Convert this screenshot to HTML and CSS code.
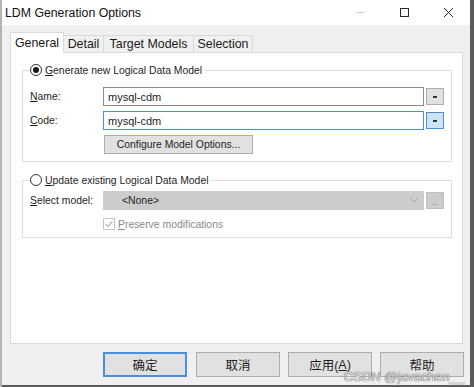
FILE: index.html
```html
<!DOCTYPE html>
<html lang="en">
<head>
    <meta charset="UTF-8">
    <title>LDM Generation Options</title>
    <link rel="stylesheet" href="styles.css">
</head>
<body>
    <div class="window">
        <div class="titlebar">
            <span class="title">LDM Generation Options</span>
            <div class="controls">
                <svg width="9" height="9" viewBox="0 0 9 9"><path d="M0 4.5H9" stroke="#d2d2d2" stroke-width="1"/></svg>
                <svg width="9" height="9" viewBox="0 0 9 9"><rect x="0.5" y="0.5" width="8" height="8" fill="none" stroke="#2b2b2b" stroke-width="1"/></svg>
                <svg width="9" height="9" viewBox="0 0 9 9"><path d="M0 0L9 9M9 0L0 9" stroke="#2b2b2b" stroke-width="1"/></svg>
            </div>
        </div>

        <div class="content">
            <div class="tabs">
                <div class="tab active tab-general">General</div>
                <div class="tab tab-detail">Detail</div>
                <div class="tab tab-target">Target Models</div>
                <div class="tab tab-selection">Selection</div>
            </div>

            <div class="panel">
                <fieldset class="group group-new">
                    <legend><span class="radio checked"></span><span><u>G</u>enerate new Logical Data Model</span></legend>
                    <div class="row">
                        <label><u>N</u>ame:</label>
                        <div class="field">mysql-cdm</div>
                        <div class="eq"><span></span></div>
                    </div>
                    <div class="row">
                        <label><u>C</u>ode:</label>
                        <div class="field focus">mysql-cdm</div>
                        <div class="eq focus"><span></span></div>
                    </div>
                    <div class="row">
                        <label></label>
                        <div class="btn configure">Configure Model Options...</div>
                    </div>
                </fieldset>

                <fieldset class="group group-update">
                    <legend><span class="radio"></span><span><u>U</u>pdate existing Logical Data Model</span></legend>
                    <div class="row">
                        <label><u>S</u>elect model:</label>
                        <div class="select">
                            <span>&lt;None&gt;</span>
                            <svg width="8" height="5" viewBox="0 0 8 5"><path d="M0.5 0.5L4 4L7.5 0.5" fill="none" stroke="#a4a4a4" stroke-width="1"/></svg>
                        </div>
                        <div class="dots"><span></span></div>
                    </div>
                    <div class="row check-row">
                        <label></label>
                        <span class="checkbox">
                            <svg width="10" height="10" viewBox="0 0 10 10"><path d="M1.5 5L4 7.5L8.5 2" fill="none" stroke="#bdbdbd" stroke-width="1.3"/></svg>
                        </span>
                        <span class="muted"><u>P</u>reserve modifications</span>
                    </div>
                </fieldset>
            </div>

            <div class="footer">
                <div class="btn action default">确定</div>
                <div class="btn action">取消</div>
                <div class="btn action">应用(<u>A</u>)</div>
                <div class="btn action">帮助</div>
            </div>
        </div>

        <div class="watermark">CSDN @javachen__</div>
    </div>
</body>
</html>
```

FILE: styles.css
```css
* {
    box-sizing: border-box;
}

body {
    margin: 0;
    height: 387px;
    background: linear-gradient(to right, #b3b3b3 0, #b3b3b3 2px, #5b5b5b 2px);
    font-family: "Liberation Sans", Arial, sans-serif;
    font-size: 10.4px;
    color: #1e1e1e;
    overflow: hidden;
}

.window {
    position: relative;
    margin-left: 2px;
    width: 468px;
    height: 385px;
    background: #f0f0f0;
    display: flex;
    flex-direction: column;
}

/* title bar */
.titlebar {
    height: 25px;
    background: #ffffff;
    display: flex;
    align-items: center;
    padding-left: 3px;
}

.title {
    font-size: 12.3px;
    color: #111;
}

.controls {
    margin-left: auto;
    display: flex;
    gap: 35px;
    padding-right: 17px;
}

/* tabs + panel */
.content {
    flex: 1;
    display: flex;
    flex-direction: column;
    padding: 0 7px 0 8px;
}

.tabs {
    margin-top: 7px;
    display: flex;
    align-items: flex-end;
}

.tab {
    height: 17px;
    border: 1px solid #d9d9d9;
    border-bottom: none;
    margin-left: -1px;
    background: #f0f0f0;
    font-size: 12.4px;
    display: flex;
    align-items: center;
    justify-content: center;
    color: #1a1a1a;
}

.tab.active {
    position: relative;
    z-index: 1;
    height: 21px;
    margin-bottom: -1px;
    margin-left: 0;
    background: #ffffff;
}

.tab-general { width: 54px; }
.tab-detail { width: 41px; }
.tab-target { width: 91px; }
.tab-selection { width: 60px; }

.panel {
    flex: 1;
    background: #ffffff;
    border: 1px solid #d9d9d9;
    padding: 10px 10px 0 11px;
}

.group {
    margin: 0;
    min-width: 0;
    border: 1px solid #dcdcdc;
    padding: 0 7px 7px 7px;
}

.group legend {
    padding: 0 3px 0 0;
    height: 14px;
    display: flex;
    align-items: center;
    gap: 3px;
}

.group-new .row:first-of-type {
    margin-top: 10px;
}

.group-update {
    margin-top: 11px;
}

.group-update .row:first-of-type {
    margin-top: 4px;
}

.radio {
    width: 12px;
    height: 12px;
    border: 1px solid #333;
    border-radius: 50%;
    display: flex;
    align-items: center;
    justify-content: center;
}

.radio.checked::after {
    content: "";
    width: 6px;
    height: 6px;
    border-radius: 50%;
    background: #1a1a1a;
}

.row {
    display: flex;
    align-items: center;
    height: 19px;
    margin-top: 5px;
}

.row label {
    width: 73px;
    flex-shrink: 0;
}

.field {
    width: 321px;
    height: 19px;
    border: 1px solid #8c8c8c;
    padding-left: 4px;
    display: flex;
    align-items: center;
    font-size: 11px;
}

.field.focus {
    border-color: #4a90d6;
}

.eq,
.dots {
    width: 18px;
    height: 17px;
    margin-left: 2px;
    border: 1px solid #adadad;
    background: #e1e1e1;
    display: flex;
    align-items: center;
    justify-content: center;
}

.eq span {
    width: 4px;
    height: 2px;
    background: #333;
}

.eq.focus {
    background: #cce4f7;
    border-color: #4a90d6;
}

.btn {
    background: #e1e1e1;
    border: 1px solid #adadad;
    display: flex;
    align-items: center;
    justify-content: center;
}

.configure {
    width: 149px;
    height: 19px;
    margin-left: 1px;
}

.select {
    width: 321px;
    height: 19px;
    background: #cccccc;
    display: flex;
    align-items: center;
    justify-content: space-between;
    padding: 0 6px 0 19px;
}

.dots {
    background: #cccccc;
    border-color: #bfbfbf;
    align-items: flex-end;
    padding-bottom: 3px;
}

.dots span {
    width: 6px;
    height: 1px;
    background: #b0b0b0;
}

.check-row {
    margin-top: 8px;
    height: 12px;
}

.checkbox {
    width: 12px;
    height: 12px;
    border: 1px solid #c4c4c4;
    display: flex;
    align-items: center;
    justify-content: center;
    margin-right: 3px;
}

.muted {
    color: #8a8a8a;
}

/* footer buttons */
.footer {
    height: 41px;
    display: flex;
    justify-content: flex-end;
    align-items: flex-start;
    gap: 8px;
    padding-top: 8px;
    margin-right: -1px;
}

.action {
    width: 84px;
    height: 25px;
    font-family: "Liberation Sans", "Noto Sans CJK SC", sans-serif;
    font-size: 12.5px;
}

.action.default {
    border: 2px solid #4a8fd8;
    margin-right: 1px;
}

/* watermark laid over the buttons */
.watermark {
    position: absolute;
    right: 6px;
    bottom: 1px;
    font-size: 13px;
    color: rgba(240, 240, 240, 0.9);
    text-shadow: 0 0 1px #5a5a5a, 0 0 1px #5a5a5a;
}
```
